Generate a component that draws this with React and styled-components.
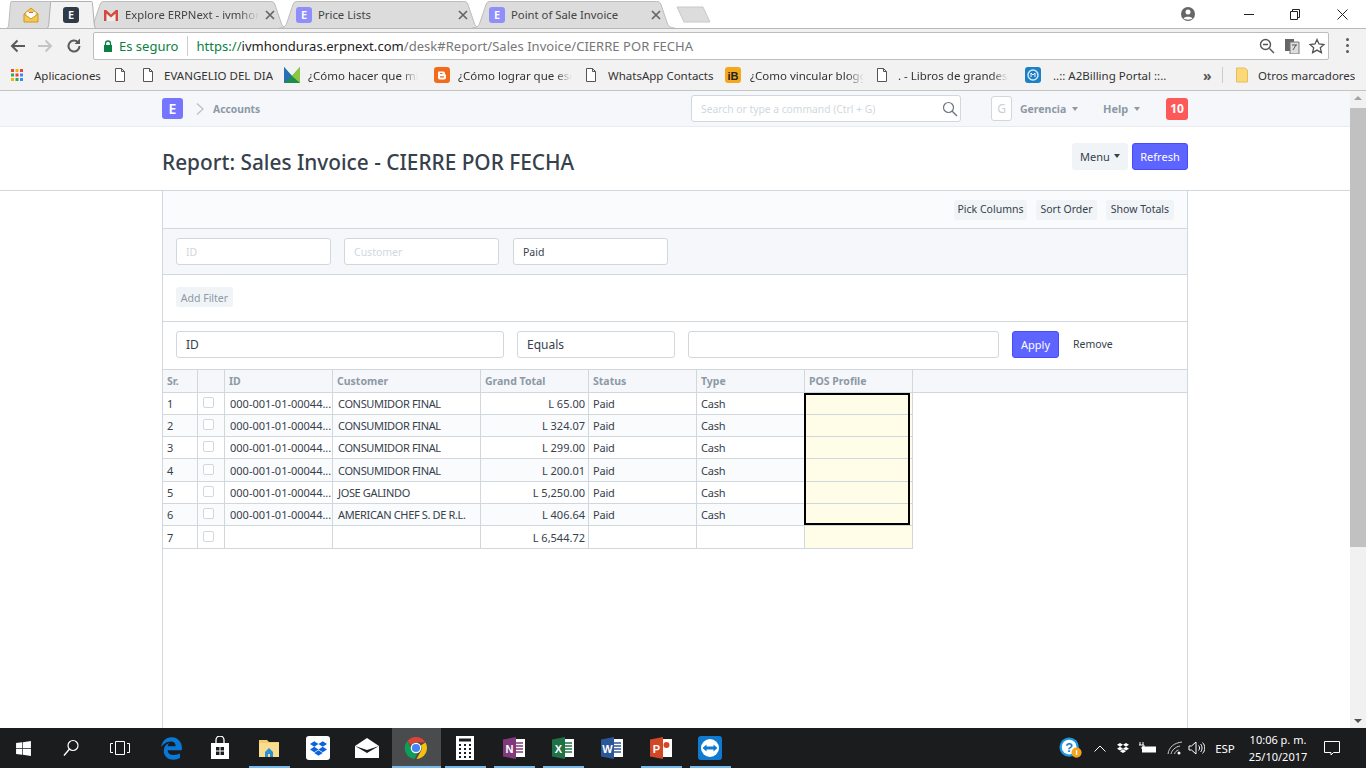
import React from "react";
import styled, { createGlobalStyle } from "styled-components";
import { FaDropbox, FaEdgeLegacy, FaWindows } from "react-icons/fa";

const Global = createGlobalStyle`
  html, body { margin: 0; padding: 0; height: 100%; overflow: hidden; background: #fff; }
  #root { height: 768px; }
  * { box-sizing: border-box; }
  body { font-family: "Noto Sans", "Open Sans", "Liberation Sans", sans-serif; color: #36414c; }
`;

const Root = styled.div`display:flex;flex-direction:column;width:1366px;height:768px;overflow:hidden;`;

/* browser chrome */
const TabStrip = styled.div`display:flex;align-items:flex-end;height:28px;padding-left:7px;background:#fff;position:relative;`;
const Tab = styled.div`
  position:relative;display:flex;align-items:center;flex:none;height:27px;width:${p=>p.$w}px;margin-left:${p=>p.$ml||0}px;
  padding:0 ${p=>p.$pr??14}px 0 ${p=>p.$pl??17}px;font-size:11.3px;color:#444;z-index:${p=>p.$z||1};
`;
const TabBg = styled.svg`position:absolute;left:0;top:0;width:100%;height:100%;`;
const TabFace = styled.div`position:relative;display:flex;align-items:center;gap:6px;width:100%;`;
const TabTitle = styled.span`flex:1;overflow:hidden;white-space:nowrap;`;
const TabFade = styled(TabTitle)`-webkit-mask-image:linear-gradient(90deg,#000 85%,transparent);mask-image:linear-gradient(90deg,#000 85%,transparent);`;
const TabClose = styled.svg`flex:none;width:10px;height:10px;`;
const NewTab = styled(Tab)`height:17px;margin-bottom:5px;`;
const WinControls = styled.div`position:absolute;right:0;top:0;height:28px;display:flex;align-items:center;`;
const WinBtn = styled.div`width:${p=>p.$w||46}px;height:28px;display:flex;align-items:center;justify-content:center;`;

const OmniBar = styled.div`display:flex;align-items:center;height:34px;background:#f2f2f2;border-top:1px solid #b8b8b8;padding-left:9px;`;
const NavIcon = styled.svg`width:18px;height:18px;margin-left:${p=>p.$ml||0}px;flex:none;`;
const Address = styled.div`
  display:flex;align-items:center;width:1236px;height:28px;margin-left:10px;background:#fff;border:1px solid #bdbdbd;border-radius:2px;
  padding:0 3px 0 9px;font-size:13px;
`;
const Secure = styled.span`color:#0b8043;margin-left:6px;padding-right:9px;border-right:1px solid #ccc;line-height:20px;`;
const Url = styled.span`margin-left:8px;color:#777;flex:1;white-space:nowrap;letter-spacing:.04px;b{font-weight:400;color:#0b8043}i{font-style:normal;color:#222}`;
const AddrIcons = styled.div`display:flex;align-items:center;gap:9px;`;
const Dots = styled.div`margin-left:17px;display:flex;flex-direction:column;gap:3px;span{width:3px;height:3px;border-radius:50%;background:#5a5a5a}`;

const Bookmarks = styled.div`display:flex;align-items:center;height:29px;background:#f2f2f2;border-bottom:1px solid #c4c4c4;padding:0 0 2px 10px;font-size:11.5px;color:#333;`;
const Mark = styled.div`display:flex;align-items:center;flex:none;width:${p=>p.$w}px;gap:${p=>p.$gap||8}px;`;
const MarkText = styled.span`
  white-space:nowrap;overflow:hidden;flex:${p=>p.$fade?1:"none"};max-width:${p=>p.$max?p.$max+"px":"none"};
  ${p=>p.$fade&&`-webkit-mask-image:linear-gradient(90deg,#000 85%,transparent);mask-image:linear-gradient(90deg,#000 85%,transparent);`}
`;
const BookSep = styled.div`width:1px;height:16px;background:#ccc;flex:none;margin:0 11px 0 0;`;
const Chev = styled.span`flex:none;width:19px;font-size:14px;font-weight:700;color:#555;`;

/* page */
const Viewport = styled.div`flex:1;display:flex;min-height:0;`;
const PageMain = styled.div`flex:1;display:flex;flex-direction:column;min-width:0;`;
const Scrollbar = styled.div`width:16px;background:#f1f1f1;display:flex;flex-direction:column;align-items:center;justify-content:space-between;position:relative;padding:5px 0;`;
const Thumb = styled.div`position:absolute;top:17px;left:0;width:16px;height:439px;background:#c1c1c1;`;
const Arrow = styled.div`width:0;height:0;border-left:4px solid transparent;border-right:4px solid transparent;${p=>p.$down?"border-top:4px solid #505050":"border-bottom:4px solid #a3a3a3"};`;

const Navbar = styled.div`height:36px;background:#f5f7fa;border-bottom:1px solid #e8ecef;flex:none;`;
const Wrap = styled.div`width:1026px;margin:0 auto;display:flex;align-items:center;height:100%;`;
const Logo = styled.div`width:${p=>p.$s||21}px;height:${p=>p.$s||21}px;border-radius:3px;background:${p=>p.$c||"#7575ff"};color:#fff;display:flex;align-items:center;justify-content:center;font-size:${p=>p.$f||14}px;font-weight:600;flex:none;`;
const Chevron = styled.svg`width:10px;height:14px;margin-left:12px;flex:none;`;
const Crumb = styled.span`font-size:10.3px;font-weight:700;color:#8d99a6;margin-left:8px;`;
const Search = styled.div`
  width:270px;height:27px;margin-left:auto;flex:none;background:#fff;border:1px solid #d1d8dd;border-radius:3px;display:flex;align-items:center;
  justify-content:space-between;padding:0 1px 0 9px;font-size:10.3px;color:#d1d8dd;
`;
const Avatar = styled.div`width:21px;height:25px;margin-left:30px;flex:none;border:1px solid #d1d8dd;border-radius:3px;background:#fff;color:#c9d0d6;display:flex;align-items:center;justify-content:center;font-size:12px;`;
const NavMenu = styled.span`display:flex;align-items:center;justify-content:space-between;flex:none;width:${p=>p.$w}px;font-size:${p=>p.$f||11}px;font-weight:700;color:#8d99a6;margin-left:${p=>p.$ml}px;`;
const Caret = styled.i`width:0;height:0;border-left:3.5px solid transparent;border-right:3.5px solid transparent;border-top:4px solid ${p=>p.$c||"#8d99a6"};display:inline-block;`;
const Badge = styled.div`width:22px;height:22px;margin-left:26px;flex:none;border-radius:3px;background:#ff5858;color:#fff;font-size:12px;font-weight:700;display:flex;align-items:center;justify-content:center;`;

const PageHead = styled.div`height:64px;flex:none;border-bottom:1px solid #d1d8dd;`;
const HeadInner = styled(Wrap)`padding-top:7px;justify-content:space-between;`;
const Title = styled.h1`margin:0;font-size:20.8px;font-weight:500;color:#36414c;white-space:nowrap;line-height:28px;`;
const Actions = styled.div`display:flex;gap:4px;position:relative;top:-6px;`;
const Btn = styled.button`
  font:inherit;font-size:${p=>p.$f||11}px;height:${p=>p.$h||27}px;width:${p=>p.$w}px;padding:${p=>p.$pad||0};border-radius:3px;
  display:flex;align-items:center;justify-content:center;gap:4px;white-space:nowrap;
  border:${p=>p.$primary?"1px solid #444bff":"0"};
  background:${p=>p.$primary?"#5e64ff":"#f0f4f7"};
  color:${p=>p.$primary?"#fff":p.$muted?"#8d99a6":"#36414c"};
`;

const Panel = styled.div`
  width:1026px;margin:0 auto;flex:1;min-height:0;border:solid #d1d8dd;border-width:0 1px;display:flex;flex-direction:column;
`;
const Toolbar = styled.div`height:38px;flex:none;background:#fafbfc;border-bottom:1px solid #d1d8dd;display:flex;align-items:center;justify-content:flex-end;gap:9px;padding:0 13px 0 0;`;
const FilterBand = styled.div`height:46px;flex:none;background:#f5f7fa;border-bottom:1px solid #d1d8dd;display:flex;align-items:center;gap:13px;padding:0 0 0 13px;`;
const Field = styled.div`
  height:27px;width:${p=>p.$w}px;flex:none;margin-left:${p=>p.$ml||0}px;background:#fff;border:1px solid #d1d8dd;border-radius:3px;display:flex;align-items:center;
  padding:${p=>p.$f?"1px":"0"} 0 0 9px;font-size:${p=>p.$f||10.5}px;color:${p=>p.$ph?"#d1d8dd":"#36414c"};
`;
const AddBand = styled.div`height:47px;flex:none;border-bottom:1px solid #d1d8dd;display:flex;align-items:center;padding:0 0 2px 13px;`;
const RuleBand = styled.div`height:48px;flex:none;border-bottom:1px solid #d1d8dd;display:flex;align-items:center;gap:13px;padding:0 0 3px 13px;`;
const RemoveLink = styled.span`font-size:10.5px;color:#36414c;margin-left:1px;`;

const GridWrap = styled.div`position:relative;flex:none;`;
const HeadRow = styled.div`display:grid;grid-template-columns:35px 27px 108px 148px 108px 108px 108px 108px 1fr;height:22.6px;background:#f5f7fa;border-bottom:1px solid #d1d8dd;`;
const HeadCell = styled.div`font-size:10.5px;font-weight:700;color:#8d99a6;padding:0 0 0 4px;border-right:${p=>p.$last?"0":"1px solid #d1d8dd"};display:flex;align-items:center;`;
const Row = styled.div`display:grid;grid-template-columns:35px 27px 108px 148px 108px 108px 108px 108px;height:22.3px;width:750px;background:${p=>p.$alt?"#fafbfc":"#fff"};border-bottom:1px solid #d1d8dd;`;
const Cell = styled.div`
  font-size:11px;color:#36414c;border-right:1px solid #d1d8dd;display:flex;align-items:center;overflow:hidden;white-space:nowrap;
  letter-spacing:${p=>p.$track||0}px;
  padding:0 ${p=>p.$right?"3px":"0"} 0 ${p=>p.$pad||5}px;justify-content:${p=>p.$right?"flex-end":"flex-start"};
  background:${p=>p.$yellow?"#fffde7":"transparent"};
`;
const Check = styled.i`width:11px;height:11px;border:1px solid #d1d8dd;border-radius:2px;background:#fff;display:block;position:relative;top:-1px;`;
const Selection = styled.div`position:absolute;left:641px;top:23px;width:106px;height:132px;border:2px solid #000;pointer-events:none;`;

/* taskbar */
const Taskbar = styled.div`height:40px;flex:none;background:#1b1c1e;display:flex;align-items:center;color:#fff;`;
const TaskSlot = styled.div`
  position:relative;width:${p=>p.$w||49}px;height:40px;display:flex;align-items:center;justify-content:center;flex:none;
  background:${p=>p.$active?"#4a4b4d":"transparent"};margin-left:${p=>p.$ml||0}px;
  ${p=>p.$on&&`&::after{content:"";position:absolute;left:${p.$active?0:4}px;right:${p.$active?0:4}px;bottom:0;height:2px;background:#76b9ed;}`}
`;
const DropOnTile = styled(FaDropbox)`position:absolute;`;
const Tray = styled.div`margin-left:auto;display:flex;align-items:center;height:40px;`;
const TraySlot = styled.div`width:${p=>p.$w}px;display:flex;align-items:center;justify-content:center;flex:none;font-size:${p=>p.$f||11.5}px;`;
const Clock = styled.div`width:74px;text-align:center;font-size:11px;line-height:17px;flex:none;color:#fff;`;

const Fav = styled.svg`width:${p=>p.$s||16}px;height:${p=>p.$s||16}px;flex:none;display:block;`;

const DocIcon = () => (
  <Fav viewBox="0 0 16 16"><path d="M3.5 1.5h6l3 3v10h-9z M9.5 1.5v3h3" fill="#fff" stroke="#555" strokeWidth="1"/></Fav>
);
const EFav = ({ c = "#8f8ffb" }) => <Logo $s={16} $f={11} $c={c}>E</Logo>;
const CloseX = () => (
  <TabClose viewBox="0 0 10 10"><path d="M1 1l8 8M9 1L1 9" stroke="#666" strokeWidth="1.7"/></TabClose>
);
const TabShape = ({ active }) => (
  <TabBg viewBox="0 0 200 27" preserveAspectRatio="none">
    <path d="M0 27 C6 27 7 24 8 21 L14 3 C15 1 16 .5 18 .5 H182 C184 .5 185 1 186 3 L192 21 C193 24 194 27 200 27" fill={active ? "#f2f2f2" : "#dcdcdc"} stroke={active ? "#b0b0b0" : "#bcbcbc"} strokeWidth="1" vectorEffect="non-scaling-stroke"/>
  </TabBg>
);
const Gmail = () => (
  <Fav viewBox="0 0 16 16"><path d="M3.4 14V6.6L8 10.600 12.600 6.600V14z" fill="#ededed"/><path d="M1 3h2.200L8 7.500 12.800 3H15v11h-2.400V6.600L8 10.600 3.400 6.600V14H1z" fill="#d4493c"/></Fav>
);
const Mail = () => (
  <Fav viewBox="0 0 16 16"><path d="M1 7 8 1l7 6v8H1z" fill="#f6c94c" stroke="#c79a2d"/><path d="M3.500 5h9v4L8 11.500 3.500 9z" fill="#fff"/><path d="M1 7l7 5 7-5" fill="none" stroke="#c79a2d"/><path d="M6 5.500h4" stroke="#e55"/></Fav>
);
const AppsGrid = () => (
  <Fav viewBox="0 0 14 14" $s={14}>
    {["#e8453c","#f4b400","#e8453c","#34a853","#ea4335","#4285f4","#f4b400","#34a853","#4285f4"].map((c, i) => (
      <rect key={i} x={1 + (i % 3) * 4.5} y={1 + Math.floor(i / 3) * 4.5} width="3" height="3" fill={c}/>
    ))}
  </Fav>
);
const LeafLogo = () => (
  <Fav viewBox="0 0 16 16"><path d="M0 0l8 9 8-9v16H0z" fill="#1b8e4f"/><path d="M0 0l8 9-8 7z" fill="#2a6fb5"/><path d="M16 0L8 9l8 7z" fill="#8dc63f"/></Fav>
);
const Blogger = () => (
  <Fav viewBox="0 0 16 16"><rect width="16" height="16" rx="3" fill="#f26a1b"/><path d="M5 4.500h4.200A2 2 0 0 1 11 6.600V7c0 .3.300.5.500.5s.5.300.5.600v2.400A1.900 1.900 0 0 1 10.100 12.500H5.800A1.900 1.900 0 0 1 4 10.600V5.500A1 1 0 0 1 5 4.500z" fill="#fff"/><path d="M6 6.500h2.500M6 9.800h4" stroke="#f26a1b" strokeWidth="1.200"/></Fav>
);
const IB = () => (
  <Fav viewBox="0 0 16 16"><rect width="16" height="16" rx="3" fill="#f5a81c"/><text x="8" y="12.500" textAnchor="middle" fontSize="11" fontWeight="700" fill="#222" fontFamily="Liberation Sans">iB</text></Fav>
);
const A2B = () => (
  <Fav viewBox="0 0 16 16"><rect width="16" height="16" rx="3" fill="#1d7fc4"/><circle cx="8" cy="8" r="5" fill="none" stroke="#cfe9fb" strokeWidth="1.500"/><path d="M6 10V6l2 2 2-2v4" fill="none" stroke="#fff"/></Fav>
);
const Folder = () => (
  <Fav viewBox="0 0 16 16"><path d="M2.500 1h8l3 2v12h-11z" fill="#fbd878" stroke="#e6bd5a"/></Fav>
);

const Rows = [
  ["1", "CONSUMIDOR FINAL", "L 65.00"],
  ["2", "CONSUMIDOR FINAL", "L 324.07"],
  ["3", "CONSUMIDOR FINAL", "L 299.00"],
  ["4", "CONSUMIDOR FINAL", "L 200.01"],
  ["5", "JOSE GALINDO", "L 5,250.00"],
  ["6", "AMERICAN CHEF S. DE R.L.", "L 406.64"],
];

const Chrome = () => (
  <svg width="24" height="24" viewBox="0 0 24 24">
    <path d="M12 1a11 11 0 0 1 9.500 5.500H12a5.500 5.500 0 0 0-5 3.200L3.500 4.800A11 11 0 0 1 12 1z" fill="#db4437"/>
    <path d="M21.500 6.500A11 11 0 0 1 12.500 23l4.200-7.500a5.500 5.500 0 0 0 .1-6z" fill="#f4c20d"/>
    <path d="M3.500 4.800l4.300 8.800a5.500 5.500 0 0 0 5.500 3.800L10.500 23A11 11 0 0 1 3.500 4.800z" fill="#0f9d58"/>
    <circle cx="12" cy="12" r="4.700" fill="#4285f4" stroke="#fff" strokeWidth="1.200"/>
  </svg>
);
const OfficeIcon = ({ c, l, pp }) => (
  <svg width="24" height="24" viewBox="0 0 24 24">
    <rect x="10" y="3" width="13" height="18" fill="#fff"/>
    {pp ? <circle cx="17.500" cy="9" r="3" fill={c}/> : <path d="M13 7h8M13 10h8M13 13h8M13 16h8" stroke={c} strokeWidth="1.300"/>}
    <path d="M1 3.500 14 1v22L1 20.500z" fill={c}/>
    <text x="7.500" y="16.500" textAnchor="middle" fontSize="11" fontWeight="700" fill="#fff" fontFamily="Liberation Sans">{l}</text>
  </svg>
);

export default function App() {
  return (
    <Root>
      <Global />
      <TabStrip>
        <Tab $w={49} $pl={16} $pr={4}><TabShape/><TabFace><Mail/></TabFace></Tab>
        <Tab $w={49} $ml={-9} $pl={16} $pr={4} $z={5}><TabShape active/><TabFace><Logo $s={16} $f={11} $c="#2f3a46">E</Logo></TabFace></Tab>
        <Tab $w={203} $ml={-10}><TabShape/><TabFace><Gmail/><TabFade>Explore ERPNext - ivmhonduras</TabFade><CloseX/></TabFace></Tab>
        <Tab $w={203} $ml={-10}><TabShape/><TabFace><EFav/><TabTitle>Price Lists</TabTitle><CloseX/></TabFace></Tab>
        <Tab $w={203} $ml={-10}><TabShape/><TabFace><EFav/><TabTitle>Point of Sale Invoice</TabTitle><CloseX/></TabFace></Tab>
        <NewTab $w={36} $ml={1}>
          <TabBg viewBox="0 0 36 17" preserveAspectRatio="none"><path d="M1 1h26l7 15H8z" fill="#dcdcdc" stroke="#c8c8c8"/></TabBg>
        </NewTab>
        <WinControls>
          <WinBtn $w={36}>
            <svg width="16" height="16" viewBox="0 0 16 16"><circle cx="8" cy="8" r="7" fill="#666"/><circle cx="8" cy="6" r="2.500" fill="#fff"/><path d="M3.500 12.500c1-2.500 8-2.500 9 0-1.500 1.500-7.500 1.500-9 0z" fill="#fff"/></svg>
          </WinBtn>
          <WinBtn $w={20}/>
          <WinBtn><svg width="10" height="10"><path d="M0 5.500h10" stroke="#222"/></svg></WinBtn>
          <WinBtn><svg width="10" height="11"><path d="M.5 2.500h7v8h-7z M2.500 2.500v-2h7v8h-2" fill="none" stroke="#222"/></svg></WinBtn>
          <WinBtn $w={48}><svg width="11" height="11"><path d="M.5.500l10 10M10.500.500l-10 10" stroke="#222"/></svg></WinBtn>
        </WinControls>
      </TabStrip>

      <OmniBar>
        <NavIcon viewBox="0 0 18 18"><path d="M16 9H3M8.500 3.500 3 9l5.500 5.500" fill="none" stroke="#5a5a5a" strokeWidth="2"/></NavIcon>
        <NavIcon viewBox="0 0 18 18" $ml={9}><path d="M2 9h13M9.500 3.500 15 9l-5.500 5.500" fill="none" stroke="#c4c4c4" strokeWidth="2"/></NavIcon>
        <NavIcon viewBox="0 0 18 18" $ml={11}><path d="M14.500 9a5.500 5.500 0 1 1-1.600-3.900" fill="none" stroke="#5a5a5a" strokeWidth="2"/><path d="M15 1.500v5.500H9.500z" fill="#5a5a5a"/></NavIcon>
        <Address>
          <svg width="10" height="12" viewBox="0 0 10 12"><path d="M2.500 5V3.500a2.500 2.500 0 0 1 5 0V5" fill="none" stroke="#0b8043" strokeWidth="1.300"/><rect x="1" y="5" width="8" height="7" fill="#0b8043"/></svg>
          <Secure>Es seguro</Secure>
          <Url><b>https://</b><i>ivmhonduras.erpnext.com</i>/desk#Report/Sales Invoice/CIERRE POR FECHA</Url>
          <AddrIcons>
            <svg width="16" height="16" viewBox="0 0 16 16"><circle cx="6.500" cy="6.500" r="5" fill="none" stroke="#555" strokeWidth="1.400"/><path d="M10.500 10.500 15 15M4 6.500h5" stroke="#555" strokeWidth="1.400"/></svg>
            <svg width="16" height="16" viewBox="0 0 16 16"><path d="M1 1h9v12H1z" fill="#666"/><path d="M6 4h9v12H6z" fill="#ddd" stroke="#777"/><path d="M8 7h5M9 12l3-5" stroke="#555"/></svg>
            <svg width="16" height="16" viewBox="0 0 16 16"><path d="M8 1.500 10 6l5 .500-3.700 3.200 1.100 4.900L8 12.100l-4.400 2.500 1.100-4.900L1 6.500 6 6z" fill="none" stroke="#555" strokeWidth="1.300"/></svg>
          </AddrIcons>
        </Address>
        <Dots><span/><span/><span/></Dots>
      </OmniBar>

      <Bookmarks>
        <Mark $w={102} $gap={10}><AppsGrid/><MarkText>Aplicaciones</MarkText></Mark>
        <Mark $w={28}><DocIcon/></Mark>
        <Mark $w={144}><DocIcon/><MarkText>EVANGELIO DEL DIA</MarkText></Mark>
        <Mark $w={150}><LeafLogo/><MarkText $fade $max={110}>¿Cómo hacer que mi página</MarkText></Mark>
        <Mark $w={149}><Blogger/><MarkText $fade $max={114}>¿Cómo lograr que escriban</MarkText></Mark>
        <Mark $w={142} $gap={9}><DocIcon/><MarkText>WhatsApp Contacts</MarkText></Mark>
        <Mark $w={149} $gap={9}><IB/><MarkText $fade $max={114}>¿Como vincular blogger con</MarkText></Mark>
        <Mark $w={151}><DocIcon/><MarkText $fade $max={110}>. - Libros de grandes autores</MarkText></Mark>
        <Mark $w={178} $gap={12}><A2B/><MarkText>..:: A2Billing Portal ::..</MarkText></Mark>
        <Chev>»</Chev>
        <BookSep/>
        <Mark $w={120}><Folder/><MarkText>Otros marcadores</MarkText></Mark>
      </Bookmarks>

      <Viewport>
        <PageMain>
          <Navbar>
            <Wrap>
              <Logo>E</Logo>
              <Chevron viewBox="0 0 10 14"><path d="M2 1.500 8 7l-6 5.500" fill="none" stroke="#b8c2cc" strokeWidth="1.300"/></Chevron>
              <Crumb>Accounts</Crumb>
              <Search>
                Search or type a command (Ctrl + G)
                <svg width="18" height="18" viewBox="0 0 18 18"><circle cx="7.500" cy="7.500" r="5" fill="none" stroke="#6c7680" strokeWidth="1.200"/><path d="m11 11 5 5" stroke="#6c7680" strokeWidth="1.400"/></svg>
              </Search>
              <Avatar>G</Avatar>
              <NavMenu $ml={8} $w={58} $f={10.5}>Gerencia <Caret/></NavMenu>
              <NavMenu $ml={25} $w={37}>Help <Caret/></NavMenu>
              <Badge>10</Badge>
            </Wrap>
          </Navbar>
          <PageHead>
            <HeadInner>
              <Title>Report: Sales Invoice - CIERRE POR FECHA</Title>
              <Actions>
                <Btn $w={56}>Menu <Caret $c="#36414c"/></Btn>
                <Btn $w={56} $primary>Refresh</Btn>
              </Actions>
            </HeadInner>
          </PageHead>
          <Panel>
            <Toolbar>
              <Btn $w={73} $h={20} $f={10.5} $pad="0 0 2px">Pick Columns</Btn>
              <Btn $w={61} $h={20} $f={10.5} $pad="0 0 2px">Sort Order</Btn>
              <Btn $w={68} $h={20} $f={10.5} $pad="0 0 2px">Show Totals</Btn>
            </Toolbar>
            <FilterBand>
              <Field $w={155} $ph>ID</Field>
              <Field $w={155} $ph>Customer</Field>
              <Field $w={155} $ml={1}>Paid</Field>
            </FilterBand>
            <AddBand><Btn $w={57} $h={20} $f={10.5} $pad="2px 0 0" $muted>Add Filter</Btn></AddBand>
            <RuleBand>
              <Field $w={328} $f={12}>ID</Field>
              <Field $w={158} $f={12}>Equals</Field>
              <Field $w={311}/>
              <Btn $w={47} $primary>Apply</Btn>
              <RemoveLink>Remove</RemoveLink>
            </RuleBand>
            <GridWrap>
              <HeadRow>
                <HeadCell>Sr.</HeadCell><HeadCell/><HeadCell>ID</HeadCell><HeadCell>Customer</HeadCell>
                <HeadCell>Grand Total</HeadCell><HeadCell>Status</HeadCell><HeadCell>Type</HeadCell><HeadCell>POS Profile</HeadCell><HeadCell $last/>
              </HeadRow>
              {Rows.map(([n, c, t], i) => (
                <Row key={n} $alt={i % 2 === 1}>
                  <Cell $pad={4}>{n}</Cell>
                  <Cell $pad={5}><Check/></Cell>
                  <Cell>000-001-01-00044...</Cell>
                  <Cell $track={-0.35}>{c}</Cell>
                  <Cell $right>{t}</Cell>
                  <Cell $pad={4} $track={-0.2}>Paid</Cell>
                  <Cell $pad={4} $track={-0.2}>Cash</Cell>
                  <Cell $yellow/>
                </Row>
              ))}
              <Row>
                <Cell $pad={4}>7</Cell>
                <Cell $pad={5}><Check/></Cell>
                <Cell/><Cell/>
                <Cell $right>L 6,544.72</Cell>
                <Cell/><Cell/>
                <Cell $yellow/>
              </Row>
              <Selection/>
            </GridWrap>
          </Panel>
        </PageMain>
        <Scrollbar><Arrow/><Thumb/><Arrow $down/></Scrollbar>
      </Viewport>

      <Taskbar>
        <TaskSlot $w={46}><FaWindows size={17} color="#fff"/></TaskSlot>
        <TaskSlot $w={50}><svg width="18" height="18" viewBox="0 0 18 18"><circle cx="11" cy="6.500" r="5" fill="none" stroke="#fff" strokeWidth="1.200"/><path d="M7.500 10 2 16.500" stroke="#fff" strokeWidth="1.400"/></svg></TaskSlot>
        <TaskSlot $w={48}><svg width="20" height="16" viewBox="0 0 20 16"><path d="M5.500 1.500h9v13h-9zM3 3.500H.5v9H3M17 3.500h2.500v9H17" fill="none" stroke="#fff"/></svg></TaskSlot>
        <TaskSlot $ml={2.5}><FaEdgeLegacy size={23} color="#0a78d6"/></TaskSlot>
        <TaskSlot>
          <svg width="22" height="24" viewBox="0 0 22 24"><path d="M2 7h18v16H2z" fill="#fff"/><path d="M7 7V4a4 4 0 0 1 8 0v3" fill="none" stroke="#fff" strokeWidth="1.300"/><path d="M7 11h3.500v3.500H7zM11.500 11H15v3.500h-3.500zM7 15.500h3.500V19H7zM11.500 15.500H15V19h-3.500z" fill="#1b1c1e"/></svg>
        </TaskSlot>
        <TaskSlot $on>
          <svg width="22" height="22" viewBox="0 0 22 22"><path d="M1 3h8l2 2h10v15H1z" fill="#f5cc6a"/><path d="M1 6h20v14H1z" fill="#f9dd8f"/><path d="M7 20v-5l4-4 4 4v5h-3v-3h-2v3z" fill="#2c8fd8"/></svg>
        </TaskSlot>
        <TaskSlot>
          <svg width="24" height="24" viewBox="0 0 24 24"><rect width="24" height="24" rx="3" fill="#fff"/></svg>
          <DropOnTile size={17} color="#0d62e0"/>
        </TaskSlot>
        <TaskSlot>
          <svg width="24" height="20" viewBox="0 0 24 20"><path d="M12 0 24 8v12H0V8z" fill="#fff"/><path d="M0 8l12 7 12-7-12 4z" fill="#1b1c1e"/></svg>
        </TaskSlot>
        <TaskSlot $active $on><Chrome/></TaskSlot>
        <TaskSlot $on>
          <svg width="18" height="24" viewBox="0 0 18 24"><rect width="18" height="24" fill="#fff"/><rect x="3" y="2.500" width="12" height="3" fill="#1b1c1e"/><path d="M3 9h2M8 9h2M13 9h2M3 13h2M8 13h2M13 13h2M3 17h2M8 17h2M13 17h2M3 21h2M8 21h2M13 21h2" stroke="#1b1c1e" strokeWidth="2"/></svg>
        </TaskSlot>
        <TaskSlot $on><OfficeIcon c="#80397b" l="N"/></TaskSlot>
        <TaskSlot $on><OfficeIcon c="#1f7245" l="X"/></TaskSlot>
        <TaskSlot><OfficeIcon c="#2b579a" l="W"/></TaskSlot>
        <TaskSlot $on><OfficeIcon c="#d24726" l="P" pp/></TaskSlot>
        <TaskSlot $on>
          <svg width="24" height="24" viewBox="0 0 24 24"><rect width="24" height="24" rx="3" fill="#0e7ad1"/><circle cx="12" cy="12" r="9" fill="#fff"/><path d="M4.500 12l4-3.500v2h7v-2l4 3.500-4 3.500v-2h-7v2z" fill="#0e7ad1"/></svg>
        </TaskSlot>
        <Tray>
          <TraySlot $w={24}>
            <svg width="26" height="24" viewBox="0 0 26 24"><circle cx="11" cy="11" r="10.500" fill="#1a9ae0"/><circle cx="11" cy="11" r="8" fill="#fff"/><text x="11" y="16" textAnchor="middle" fontSize="14" fontWeight="700" fill="#1a7ec4" fontFamily="Liberation Sans">?</text><circle cx="19" cy="17" r="5.500" fill="#f6a21e"/><path d="M19 14.500v5" stroke="#fff" strokeWidth="1.500"/></svg>
          </TraySlot>
          <TraySlot $w={34}><svg width="12" height="7"><path d="M.5 6.500l5.500-5.500 5.500 5.500" fill="none" stroke="#fff"/></svg></TraySlot>
          <TraySlot $w={12}><FaDropbox size={14} color="#fff"/></TraySlot>
          <TraySlot $w={38}><svg width="18" height="14" viewBox="0 0 18 14"><path d="M1 1v3M4 1v3M0 4h5v2H3v2" fill="none" stroke="#fff"/><path d="M3 5.500h14v6H3z" fill="#fff"/></svg></TraySlot>
          <TraySlot $w={16}><svg width="16" height="14" viewBox="0 0 16 14"><path d="M1 13C2 6 7 2 15 1M4 13c1-4 4-7 9-8M7.500 13c.5-2 2-3.500 4-4" fill="none" stroke="#cfcfcf"/><circle cx="12" cy="12" r="1.500" fill="#fff"/></svg></TraySlot>
          <TraySlot $w={26}><svg width="17" height="14" viewBox="0 0 17 14"><path d="M1 5h2.500L8 1v12L3.500 9H1z M10.500 4.500c1.500 1.500 1.500 3.500 0 5M12.500 3c2 2 2 6 0 8M14.500 1.500c3 3 3 8 0 11" fill="none" stroke="#fff"/></svg></TraySlot>
          <TraySlot $w={32}>ESP</TraySlot>
          <Clock>10:06 p. m.<br/>25/10/2017</Clock>
          <TraySlot $w={34}><svg width="16" height="15" viewBox="0 0 16 15"><path d="M.5.500h15v11H9.500L7 14V11.500H.5z" fill="none" stroke="#fff"/></svg></TraySlot>
          <TraySlot $w={17}/>
        </Tray>
      </Taskbar>
    </Root>
  );
}
